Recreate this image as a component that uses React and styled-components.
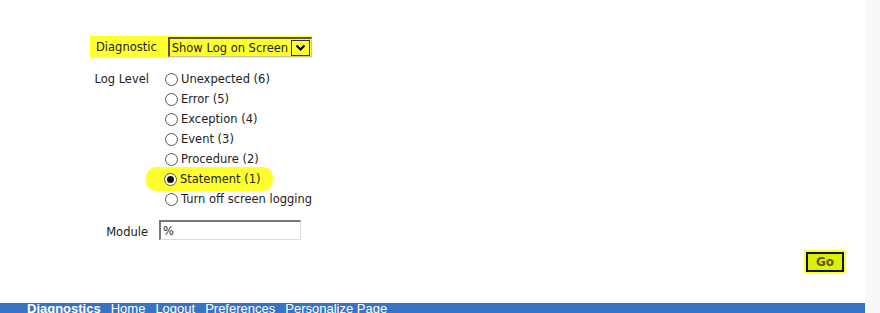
import React from 'react';
import styled, { createGlobalStyle } from 'styled-components';

const GlobalStyle = createGlobalStyle`
    html, body { margin: 0; padding: 0; background: #ffffff; }
    body { font-family: "DejaVu Sans", Tahoma, sans-serif; font-size: 11.5px; color: #222; }
`;

const levels = [
    { label: 'Unexpected (6)' },
    { label: 'Error (5)' },
    { label: 'Exception (4)' },
    { label: 'Event (3)' },
    { label: 'Procedure (2)' },
    { label: 'Statement (1)', checked: true },
    { label: 'Turn off screen logging' },
];

const footerLinks = [
    { label: 'Diagnostics', bold: true },
    { label: 'Home' },
    { label: 'Logout' },
    { label: 'Preferences' },
    { label: 'Personalize Page' },
];

const App = () => (
    <>
        <GlobalStyle />
        <Page>
            <Main>
                <Form>
                    <DiagRow>
                        <Highlight>Diagnostic</Highlight>
                        <FakeSelect>
                            <SelectText>Show Log on Screen</SelectText>
                            <Arrow>
                                <svg width="11" height="8" viewBox="0 0 11 8">
                                    <path d="M1.5 1.5 L5.5 5.5 L9.5 1.5" fill="none" stroke="#000" strokeWidth="2" />
                                </svg>
                            </Arrow>
                        </FakeSelect>
                    </DiagRow>

                    <LevelRow>
                        <Label>Log Level</Label>
                        <RadioList>
                            {levels.map((l) => (
                                <RadioItem key={l.label} $hl={l.checked}>
                                    <Radio $checked={l.checked} />
                                    <span>{l.label}</span>
                                </RadioItem>
                            ))}
                        </RadioList>
                    </LevelRow>

                    <ModuleRow>
                        <Label $w={148}>Module</Label>
                        <TextInput defaultValue="%" />
                    </ModuleRow>

                    <Actions>
                        <GoWrap>
                            <GoButton>Go</GoButton>
                        </GoWrap>
                    </Actions>
                </Form>
                <Footer>
                    {footerLinks.map((f) => (
                        <FooterLink key={f.label} $bold={f.bold}>{f.label}</FooterLink>
                    ))}
                </Footer>
            </Main>
            <Side />
        </Page>
    </>
);

const Page = styled.div`
    display: flex;
    width: 880px;
    height: 313px;
    overflow: hidden;
`;

const Main = styled.div`
    width: 865px;
    display: flex;
    flex-direction: column;
    background: #ffffff;
`;

const Side = styled.div`
    width: 15px;
    background: #f8f8f8;
`;

const Form = styled.div`
    flex: 1;
    padding-top: 36px;
`;

const DiagRow = styled.div`
    display: flex;
    align-items: center;
    height: 22px;
    margin-left: 90px;
    background: linear-gradient(#ffff2e, #ffff2e) no-repeat left / 222px 22px;
`;

const Highlight = styled.div`
    height: 22px;
    line-height: 22px;
    padding: 0 9px 0 6px;
    border-radius: 2px;
`;

const FakeSelect = styled.div`
    display: flex;
    align-items: center;
    height: 20px;
    box-sizing: border-box;
    width: 144px;
    margin-left: 2px;
    background: #ffff2e;
    border-left: 2px solid #555;
    border-top: 2px solid #555;
    border-bottom: 1px solid #c8c8a0;
    border-right: 1px solid #c8c8a0;
`;

const SelectText = styled.span`
    flex: 1;
    padding-left: 2px;
    white-space: nowrap;
    overflow: hidden;
`;

const Arrow = styled.div`
    width: 19px;
    height: 16px;
    box-sizing: border-box;
    border: 1px solid #333;
    display: flex;
    align-items: center;
    justify-content: center;
    margin-right: 1px;
`;

const LevelRow = styled.div`
    display: flex;
    margin-top: 11px;
`;

const Label = styled.div`
    width: ${({ $w }) => $w || 149}px;
    text-align: right;
    padding-top: 3px;
    box-sizing: border-box;
`;

const RadioList = styled.div`
    display: flex;
    flex-direction: column;
`;

const RadioItem = styled.div`
    display: flex;
    align-items: center;
    height: 20px;
    gap: 3px;
    padding-left: 16px;
    background: ${({ $hl }) => ($hl ? '#ffff2e' : 'transparent')};
    border-radius: ${({ $hl }) => ($hl ? '8px' : '0')};
    margin-left: ${({ $hl }) => ($hl ? '-1px' : '0')};
    width: ${({ $hl }) => ($hl ? '107px' : 'auto')};
    box-shadow: ${({ $hl }) => ($hl ? '0 0 0 2px #ffff2e' : 'none')};
`;

const Radio = styled.span`
    width: 13px;
    height: 13px;
    box-sizing: border-box;
    border-radius: 50%;
    border: 1px solid #555;
    background: #fff;
    display: flex;
    align-items: center;
    justify-content: center;
    &::after {
        content: '';
        display: ${({ $checked }) => ($checked ? 'block' : 'none')};
        width: 7px;
        height: 7px;
        border-radius: 50%;
        background: #111;
    }
`;

const ModuleRow = styled.div`
    display: flex;
    align-items: center;
    margin-top: 11px;
`;

const TextInput = styled.input`
    margin-left: 11px;
    width: 142px;
    height: 20px;
    box-sizing: border-box;
    font-family: "DejaVu Sans", Tahoma, sans-serif;
    font-size: 11.5px;
    color: #222;
    padding: 1px 2px;
    border-top: 2px solid #777;
    border-left: 2px solid #777;
    border-right: 1px solid #ddd;
    border-bottom: 1px solid #ddd;
    outline: none;
`;

const Actions = styled.div`
    display: flex;
    justify-content: flex-end;
    padding-right: 19px;
    margin-top: 10px;
`;

const GoWrap = styled.div`
    background: #ffff2e;
    padding: 2px;
    border-radius: 2px;
`;

const GoButton = styled.button`
    width: 38px;
    height: 20px;
    box-sizing: border-box;
    border: 2px solid #111;
    background: #dcf000;
    color: #5a5a10;
    font-family: "DejaVu Sans", Tahoma, sans-serif;
    font-size: 12px;
    font-weight: bold;
    padding: 0;
`;

const Footer = styled.div`
    height: 10px;
    background: #3a73c1;
    display: flex;
    gap: 10px;
    padding-left: 27px;
    overflow: hidden;
    font-family: "Liberation Sans", Arial, sans-serif;
    font-size: 13px;
    line-height: 14px;
    color: #fff;
`;

const FooterLink = styled.span`
    font-weight: ${({ $bold }) => ($bold ? 'bold' : 'normal')};
    margin-top: -1px;
    white-space: nowrap;
`;

export default App;
